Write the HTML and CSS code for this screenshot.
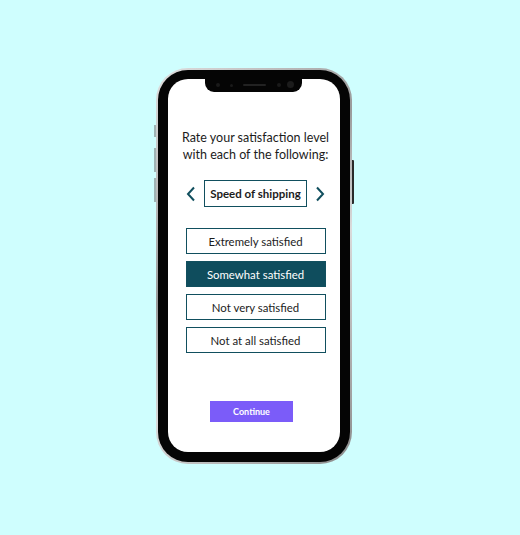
FILE: index.html
```html
<!DOCTYPE html>
<html>
<head>
<meta charset="utf-8">
<link rel="stylesheet" href="styles.css">
</head>
<body>
<div class="stage">
  <div class="phone">
    <span class="btn btn-l1"></span>
    <span class="btn btn-l2"></span>
    <span class="btn btn-l3"></span>
    <span class="btn btn-r"></span>
    <div class="bezel">
      <div class="screen">
        <div class="notch">
          <span class="dot d1"></span>
          <span class="dot d2"></span>
          <span class="speaker"></span>
          <span class="dot d3"></span>
          <span class="dot cam"></span>
        </div>
        <p class="title">Rate your satisfaction level<br>with each of the following:</p>
        <div class="selector">
          <svg class="chev" width="10" height="16" viewBox="0 0 10 16"><polyline points="8,1.5 2,8 8,14.5" fill="none" stroke="#114f5e" stroke-width="2"/></svg>
          <div class="topic">Speed of shipping</div>
          <svg class="chev" width="10" height="16" viewBox="0 0 10 16"><polyline points="2,1.5 8,8 2,14.5" fill="none" stroke="#114f5e" stroke-width="2"/></svg>
        </div>
        <div class="options">
          <div class="option">Extremely satisfied</div>
          <div class="option selected">Somewhat satisfied</div>
          <div class="option">Not very satisfied</div>
          <div class="option">Not at all satisfied</div>
        </div>
        <div class="continue">Continue</div>
      </div>
    </div>
  </div>
</div>
</body>
</html>
```
FILE: styles.css
```css
html, body {
  margin: 0;
  padding: 0;
  background: #cffefe;
  width: 520px;
  height: 535px;
  overflow: hidden;
}
.stage {
  padding: 68px 0 0 156px;
}
.phone {
  position: relative;
  width: 196px;
  height: 396px;
  box-sizing: border-box;
  padding: 2px;
  border-radius: 32px;
  background: linear-gradient(135deg, #e0e0e0 0%, #9a9a9a 40%, #dadada 60%, #8a8a8a 100%);
}
.bezel {
  height: 100%;
  box-sizing: border-box;
  padding: 9px 10px 10px 10px;
  border-radius: 30px;
  background: #050505;
}
.screen {
  position: relative;
  height: 100%;
  box-sizing: border-box;
  padding-left: 3px;
  background: #fff;
  border-radius: 20px;
  display: flex;
  flex-direction: column;
  align-items: center;
  font-family: "Lato", "Noto Sans", sans-serif;
  color: #1c1c1c;
}
.notch {
  position: absolute;
  top: -1px;
  left: 37px;
  width: 97px;
  height: 14px;
  background: #050505;
  border-radius: 0 0 9px 9px;
}
.dot {
  position: absolute;
  border-radius: 50%;
  background: #1a1a1a;
}
.d1 { left: 11px; top: 5px; width: 4px; height: 4px; }
.d2 { left: 25px; top: 6px; width: 3px; height: 3px; }
.d3 { left: 72px; top: 5px; width: 4px; height: 4px; }
.cam { left: 82px; top: 3px; width: 7px; height: 7px; background: #1c1c1c; }
.speaker {
  position: absolute;
  left: 38px;
  top: 6px;
  width: 23px;
  height: 2px;
  border-radius: 1px;
  background: #222;
}
.btn {
  position: absolute;
  width: 2px;
}
.btn-l1 { left: -2px; top: 57px; height: 12px; background: #9fb3b4; }
.btn-l2 { left: -2px; top: 80px; height: 24px; background: #9fb3b4; }
.btn-l3 { left: -2px; top: 110px; height: 24px; background: #9fb3b4; }
.btn-r { right: -2px; top: 92px; height: 44px; background: #2a2a2a; border-radius: 0 1px 1px 0; }
.title {
  margin: 50px 0 0 0;
  font-size: 12.5px;
  line-height: 17px;
  text-align: center;
}
.selector {
  margin-top: 17px;
  display: flex;
  align-items: center;
  gap: 8px;
}
.topic {
  width: 103px;
  height: 27px;
  box-sizing: border-box;
  border: 1px solid #114f5e;
  display: flex;
  align-items: center;
  justify-content: center;
  font-size: 11.5px;
  font-weight: 700;
}
.options {
  margin-top: 21px;
  display: flex;
  flex-direction: column;
  gap: 7px;
}
.option {
  width: 140px;
  height: 26px;
  box-sizing: border-box;
  border: 1px solid #114f5e;
  display: flex;
  align-items: center;
  justify-content: center;
  font-size: 11.4px;
}
.option.selected {
  background: #0f4d5d;
  color: #fff;
}
.continue {
  margin-top: 48px;
  margin-right: 8px;
  width: 83px;
  height: 21px;
  background: #7b5cf9;
  color: #fff;
  font-size: 9px;
  font-weight: 700;
  display: flex;
  align-items: center;
  justify-content: center;
}
```
